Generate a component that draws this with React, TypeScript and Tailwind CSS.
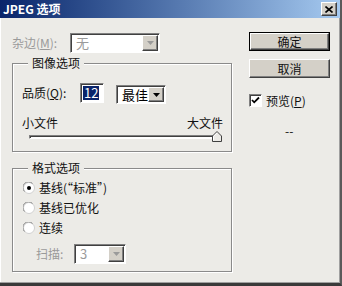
import React from "react";

const raised =
  "border border-t-white border-l-white border-b-[#404040] border-r-[#404040] shadow-[inset_-1px_-1px_0_#808080] bg-[#d4d0c8]";
const sunken =
  "border border-t-[#808080] border-l-[#808080] border-b-white border-r-white shadow-[inset_1px_1px_0_#404040]";

function Arrow({ disabled }: { disabled?: boolean }) {
  return (
    <svg width="7" height="4" viewBox="0 0 7 4">
      <path d="M0 0h7L3.5 4z" fill={disabled ? "#9a9a9a" : "#000"} />
    </svg>
  );
}

function Combo({
  value,
  width,
  height,
  disabled,
}: {
  value: string;
  width: string;
  height: string;
  disabled?: boolean;
}) {
  return (
    <div className={`${sunken} ${width} ${height} bg-white flex items-stretch p-[1px]`}>
      <span
        className={`flex-1 pl-[4px] flex items-center text-[13px] ${
          disabled ? "text-[#9a9a9a]" : "text-black"
        }`}
      >
        {value}
      </span>
      <span className={`${raised} w-[16px] flex items-center justify-center`}>
        <Arrow disabled={disabled} />
      </span>
    </div>
  );
}

function Radio({ checked }: { checked?: boolean }) {
  return (
    <svg width="12" height="12" viewBox="0 0 12 12">
      <circle cx="6" cy="6" r="5.5" fill="#fff" stroke="#d0d0d0" />
      <path d="M1.5 9.5A5.5 5.5 0 0 1 9.5 1.5" fill="none" stroke="#8a8a8a" />
      {checked && <circle cx="6" cy="6" r="2" fill="#000" />}
    </svg>
  );
}

function Group({
  title,
  height,
  children,
}: {
  title: string;
  height: string;
  children: React.ReactNode;
}) {
  return (
    <div
      className={`${height} border border-[#8a8a8a] shadow-[inset_1px_1px_0_#fff,1px_1px_0_#fff] flex flex-col`}
    >
      <span className="self-start ml-[15px] -mt-[8px] px-[4px] bg-[#ecebe7] leading-[14px]">
        {title}
      </span>
      {children}
    </div>
  );
}

export default function App() {
  return (
    <div className="w-[342px] h-[286px] bg-[#ecebe7] flex flex-col font-['Noto_Sans_CJK_SC',sans-serif] text-[12px] text-[#111] border-r-2 border-b-[3px] border-r-[#5a5a5a] border-b-[#3a3a3a] shadow-[inset_-1px_-1px_0_#a0a0a0,inset_1px_0_0_#fff] leading-[14px]">
      {/* Title bar */}
      <div className="h-[18px] shrink-0 bg-gradient-to-r from-[#0a246a] to-[#a6caf0] flex items-center pl-[3px] pr-[3px]">
        <span className="text-white font-bold text-[12px] flex-1">JPEG 选项</span>
        <span className={`${raised} w-[16px] h-[14px] flex items-center justify-center`}>
          <svg width="8" height="7" viewBox="0 0 8 7">
            <path d="M0.5 0.5l7 6M7.5 0.5l-7 6" stroke="#000" strokeWidth="1.6" />
          </svg>
        </span>
      </div>

      <div className="flex flex-1">
        {/* Left column */}
        <div className="ml-[12px] w-[220px] flex flex-col">
          <div className="mt-[15px] h-[20px] flex items-center">
            <span className="w-[58px] text-[#9a9a9a]">
              杂边(<span className="underline">M</span>):
            </span>
            <Combo value="无" width="w-[90px]" height="h-[20px]" disabled />
          </div>

          <div className="mt-[10px]">
            <Group title="图像选项" height="h-[89px]">
              <div className="mt-[13px] ml-[9px] h-[20px] flex items-start">
                <span className="w-[58px] self-center">
                  品质(<span className="underline">Q</span>):
                </span>
                <div className={`${sunken} w-[24px] h-[20px] bg-white flex items-center pl-[2px]`}>
                  <span className="bg-[#0a246a] text-white text-[13px] px-[1px] leading-[14px]">12</span>
                </div>
                <div className="ml-[12px] mt-[2px]">
                  <Combo value="最佳" width="w-[50px]" height="h-[19px]" />
                </div>
              </div>
              <div className="mt-[13px] ml-[9px] mr-[8px] flex justify-between">
                <span>小文件</span>
                <span>大文件</span>
              </div>
              <div className="relative mt-[5px] ml-[16px] w-[192px] h-[4px] border border-t-[#808080] border-l-[#808080] border-b-white border-r-white bg-white shadow-[inset_1px_1px_0_#404040]">
                <svg
                  className="absolute right-[-2px] top-[-5px]"
                  width="10"
                  height="11"
                  viewBox="0 0 10 11"
                >
                  <path d="M0.5 10.5V5L5 0.5 9.5 5v5.5z" fill="#ecebe7" stroke="#404040" />
                  <path d="M1.5 9.5V5.4L5 1.9" fill="none" stroke="#fff" />
                </svg>
              </div>
            </Group>
          </div>

          <div className="mt-[16px]">
            <Group title="格式选项" height="h-[104px]">
              <div className="mt-[3px] ml-[10px] flex flex-col">
                <div className="h-[20px] flex items-center gap-[4px]">
                  <Radio checked />
                  <span>基线(“标准”)</span>
                </div>
                <div className="h-[20px] flex items-center gap-[4px]">
                  <Radio />
                  <span>基线已优化</span>
                </div>
                <div className="h-[20px] flex items-center gap-[4px]">
                  <Radio />
                  <span>连续</span>
                </div>
              </div>
              <div className="mt-[6px] ml-[23px] h-[20px] flex items-center">
                <span className="w-[38px] text-[#9a9a9a]">扫描:</span>
                <Combo value="3" width="w-[52px]" height="h-[20px]" disabled />
              </div>
            </Group>
          </div>
        </div>

        {/* Right column */}
        <div className="ml-[17px] w-[81px] flex flex-col">
          <button className="mt-[14px] h-[19px] w-[81px] border border-black p-0">
            <span className={`${raised} h-full w-full flex items-center justify-center`}>确定</span>
          </button>
          <button className={`${raised} mt-[8px] h-[19px] w-[81px] flex items-center justify-center`}>
            取消
          </button>
          <div className="mt-[16px] h-[13px] flex items-center gap-[4px]">
            <span className={`${sunken} w-[13px] h-[13px] bg-white flex items-center justify-center`}>
              <svg width="9" height="9" viewBox="0 0 9 9">
                <path d="M1 4l2.2 2.3L8 1.5" fill="none" stroke="#000" strokeWidth="1.8" />
              </svg>
            </span>
            <span>
              预览(<span className="underline">P</span>)
            </span>
          </div>
          <div className="mt-[17px] pl-[36px]">--</div>
        </div>
      </div>
    </div>
  );
}
